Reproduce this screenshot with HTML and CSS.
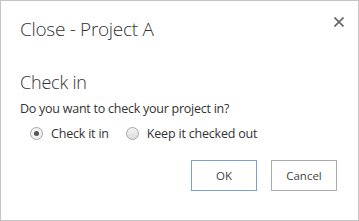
FILE: index.html
```html
<!DOCTYPE html>
<html>
<head>
<meta charset="utf-8">
<link rel="stylesheet" href="styles.css">
</head>
<body>
<div class="dialog">
  <div class="header">
    <div class="title">Close - Project A</div>
    <button class="close" aria-label="Close">
      <svg width="10" height="10" viewBox="0 0 10 10"><path d="M0.5 0.5 L9.5 9.5 M9.5 0.5 L0.5 9.5" stroke="#666" stroke-width="1.6" fill="none"/></svg>
    </button>
  </div>
  <div class="subtitle">Check in</div>
  <div class="question">Do you want to check your project in?</div>
  <div class="options">
    <label class="option"><span class="radio checked"></span><span>Check it in</span></label>
    <label class="option"><span class="radio"></span><span>Keep it checked out</span></label>
  </div>
  <div class="actions">
    <button class="btn primary">OK</button>
    <button class="btn">Cancel</button>
  </div>
</div>
</body>
</html>
```
FILE: styles.css
```css
html, body {
  margin: 0;
  padding: 0;
  background: #fff;
}
.dialog {
  box-sizing: border-box;
  width: 359px;
  height: 221px;
  border: 1px solid #c4c4c4;
  padding: 0 0 0 19px;
  font-family: "Open Sans", "Noto Sans", sans-serif;
  color: #333;
  display: flex;
  flex-direction: column;
}
.header {
  display: flex;
  justify-content: space-between;
  align-items: flex-start;
  padding-top: 15px;
  padding-right: 14px;
}
.title {
  font-size: 19px;
  font-weight: 300;
  line-height: 26px;
  color: #333;
  letter-spacing: -0.3px;
}
.close {
  border: none;
  background: none;
  padding: 0;
  margin-top: 1px;
  width: 10px;
  height: 10px;
  display: flex;
}
.subtitle {
  margin-top: 28px;
  font-size: 18px;
  font-weight: 300;
  line-height: 24px;
  color: #333;
  letter-spacing: -0.2px;
}
.question {
  margin-top: 6px;
  font-size: 12.5px;
  line-height: 17px;
  color: #333;
  letter-spacing: -0.25px;
}
.options {
  display: flex;
  gap: 17px;
  margin-top: 8px;
  padding-left: 10px;
  font-size: 12.5px;
  letter-spacing: -0.2px;
  line-height: 17px;
}
.option {
  display: flex;
  align-items: center;
  gap: 8px;
}
.radio {
  box-sizing: border-box;
  width: 13px;
  height: 13px;
  border-radius: 50%;
  border: 1px solid #a6a6a6;
  background: linear-gradient(#f4f4f4, #dcdcdc);
  display: flex;
  align-items: center;
  justify-content: center;
}
.radio.checked {
  background: #f2f2f2;
}
.radio.checked::after {
  content: "";
  width: 5px;
  height: 5px;
  border-radius: 50%;
  background: #555;
}
.actions {
  display: flex;
  justify-content: flex-end;
  gap: 14px;
  margin-top: 18px;
  padding-right: 21px;
}
.btn {
  box-sizing: border-box;
  width: 66px;
  height: 31px;
  border: 1px solid #ababab;
  background: #fff;
  font-family: "Open Sans", "Noto Sans", sans-serif;
  font-size: 11.5px;
  color: #444;
  padding: 0;
}
.btn.primary {
  border-color: #7a9fd6;
}
```
